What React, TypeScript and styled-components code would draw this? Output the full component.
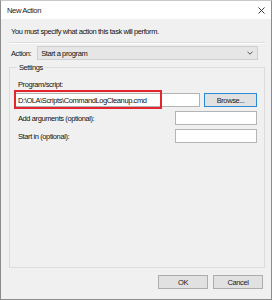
import styled, { createGlobalStyle } from 'styled-components';

const GlobalStyle = createGlobalStyle`
  html, body {
    margin: 0;
    padding: 0;
    background: #ffffff;
  }
  body {
    font-family: 'Liberation Sans', Arial, sans-serif;
    font-size: 7.5px;
    letter-spacing: -0.4px;
    color: #111111;
  }
`;

const StyledWindow = styled.div`
  width: 272px;
  height: 300px;
  box-sizing: border-box;
  border: 1px solid #8c8c8c;
  border-top-color: #c8c8c8;
  background: #f0f0f0;
  display: flex;
  flex-direction: column;
`;

const StyledTitleBar = styled.div`
  height: 18px;
  background: #ffffff;
  display: flex;
  align-items: center;
  justify-content: space-between;
  padding: 0 5px 0 6px;
  flex-shrink: 0;
`;

const StyledTitle = styled.span`
  font-size: 7.6px;
  color: #1a1a1a;
`;

const StyledClose = styled.svg`
  width: 7px;
  height: 7px;
  margin-right: 1px;
`;

const StyledBody = styled.div`
  display: flex;
  flex-direction: column;
  flex-grow: 1;
  padding: 0 6px 10px 7px;
`;

const StyledIntro = styled.div`
  padding: 6px 0 0 3px;
  height: 17px;
  line-height: 13px;
`;

const StyledSeparator = styled.div`
  height: 0;
  border-top: 1px solid #dcdcdc;
  border-bottom: 1px solid #ffffff;
  margin: 0 0 2px 1px;
`;

const StyledActionRow = styled.div`
  display: flex;
  align-items: center;
  gap: 6px;
  padding-left: 3px;
  margin-right: 7px;
`;

const StyledCombo = styled.div`
  flex-grow: 1;
  height: 14px;
  box-sizing: border-box;
  border: 1px solid #cfcfcf;
  background: #e6e6e6;
  display: flex;
  align-items: center;
  justify-content: space-between;
  padding: 0 4px 0 3px;
`;

const StyledGroup = styled.fieldset`
  margin: 2px 0 0 1px;
  padding: 4px 7px 0 5px;
  border: 1px solid #dcdcdc;
  flex-grow: 1;
  min-height: 0;
  display: flex;
  flex-direction: column;
`;

const StyledLegend = styled.legend`
  padding: 0 2px;
  margin-left: 2px;
  line-height: 11px;
`;

const StyledLabel = styled.div`
  margin: 2px 0 2px 3px;
  line-height: 12px;
`;

const StyledFieldRow = styled.div`
  display: flex;
  align-items: center;
  justify-content: space-between;
`;

const StyledInputWrap = styled.div`
  position: relative;
  display: flex;
`;

const StyledInput = styled.div<{ $width: number }>`
  width: ${(p) => p.$width}px;
  height: 14px;
  box-sizing: border-box;
  border: 1px solid #b4b4b4;
  background: #ffffff;
  display: flex;
  align-items: center;
  padding-left: 2px;
  white-space: nowrap;
  overflow: hidden;
`;

const StyledHighlight = styled.div`
  position: absolute;
  left: -1px;
  top: -3px;
  width: 148px;
  height: 19px;
  box-sizing: border-box;
  border: 2px solid #e3262d;
`;

const StyledButton = styled.div<{ $focused?: boolean; $width: number }>`
  width: ${(p) => p.$width}px;
  height: 14px;
  box-sizing: border-box;
  border: 1px solid ${(p) => (p.$focused ? '#2b88d8' : '#adadad')};
  background: #e1e1e1;
  display: flex;
  align-items: center;
  justify-content: center;
  color: #1a1a1a;
`;

const StyledSideRow = styled.div`
  display: flex;
  align-items: center;
  justify-content: space-between;
  margin-top: 4px;
  padding-left: 3px;
`;

const StyledFooter = styled.div`
  display: flex;
  justify-content: flex-end;
  gap: 5px;
  margin-top: 7px;
  padding-right: 2px;
`;

const App = () => {
  return (
    <>
      <GlobalStyle />
      <StyledWindow>
        <StyledTitleBar>
          <StyledTitle>New Action</StyledTitle>
          <StyledClose viewBox="0 0 7 7">
            <path d="M0.5 0.5 L6.5 6.5 M6.5 0.5 L0.5 6.5" stroke="#3c3c3c" strokeWidth="1" />
          </StyledClose>
        </StyledTitleBar>
        <StyledBody>
          <StyledIntro>You must specify what action this task will perform.</StyledIntro>
          <StyledSeparator />
          <StyledActionRow>
            <span>Action:</span>
            <StyledCombo>
              <span>Start a program</span>
              <svg width="6" height="4" viewBox="0 0 6 4">
                <path d="M0.5 0.8 L3 3.2 L5.5 0.8" stroke="#555" fill="none" strokeWidth="1" />
              </svg>
            </StyledCombo>
          </StyledActionRow>
          <StyledGroup>
            <StyledLegend>Settings</StyledLegend>
            <StyledLabel>Program/script:</StyledLabel>
            <StyledFieldRow>
              <StyledInputWrap>
                <StyledInput $width={185}>D:\OLA\Scripts\CommandLogCleanup.cmd</StyledInput>
                <StyledHighlight />
              </StyledInputWrap>
              <StyledButton $focused $width={53}>Browse...</StyledButton>
            </StyledFieldRow>
            <StyledSideRow>
              <span>Add arguments (optional):</span>
              <StyledInput $width={82} />
            </StyledSideRow>
            <StyledSideRow>
              <span>Start in (optional):</span>
              <StyledInput $width={82} />
            </StyledSideRow>
          </StyledGroup>
          <StyledFooter>
            <StyledButton $width={50}>OK</StyledButton>
            <StyledButton $width={50}>Cancel</StyledButton>
          </StyledFooter>
        </StyledBody>
      </StyledWindow>
    </>
  );
};

export default App;
